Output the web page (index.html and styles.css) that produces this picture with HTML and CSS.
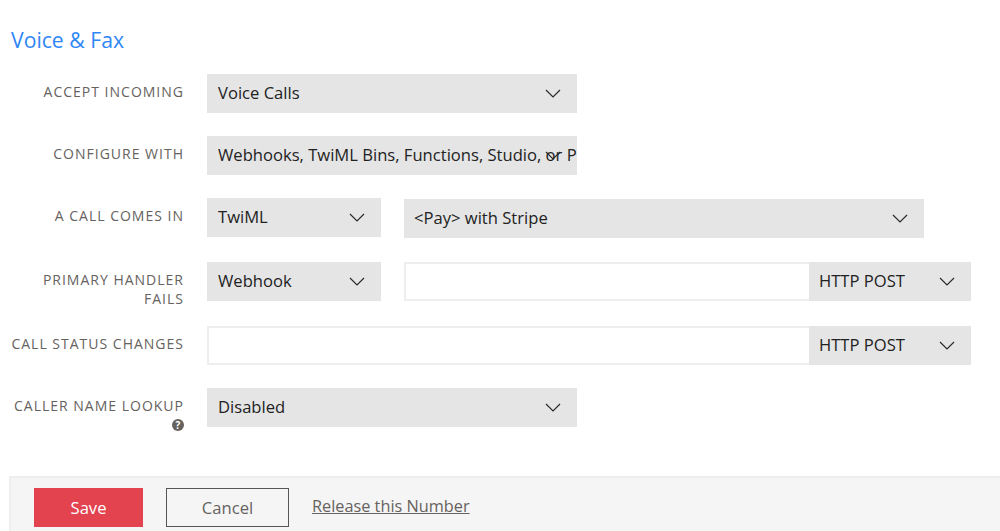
FILE: index.html
```html
<!DOCTYPE html>
<html lang="en">
<head>
<meta charset="utf-8">
<title>Voice &amp; Fax</title>
<link rel="stylesheet" href="styles.css">
</head>
<body>
<main class="content">
  <h2 class="title">Voice &amp; Fax</h2>
  <div class="form">
    <div class="row">
      <div class="label">ACCEPT INCOMING</div>
      <div class="select w-full"><span class="value">Voice Calls</span><svg class="chev" viewBox="0 0 16 9"><polyline points="1,1 8,8 15,1"/></svg></div>
    </div>
    <div class="row">
      <div class="label">CONFIGURE WITH</div>
      <div class="select w-full"><span class="value">Webhooks, TwiML Bins, Functions, Studio, or P</span><svg class="chev" viewBox="0 0 16 9"><polyline points="1,1 8,8 15,1"/></svg></div>
    </div>
    <div class="row row-tall">
      <div class="label">A CALL COMES IN</div>
      <div class="select w-small"><span class="value">TwiML</span><svg class="chev" viewBox="0 0 16 9"><polyline points="1,1 8,8 15,1"/></svg></div>
      <div class="select w-wide shifted"><span class="value">&lt;Pay&gt; with Stripe</span><svg class="chev" viewBox="0 0 16 9"><polyline points="1,1 8,8 15,1"/></svg></div>
    </div>
    <div class="row row-tall">
      <div class="label">PRIMARY HANDLER FAILS</div>
      <div class="select w-small"><span class="value">Webhook</span><svg class="chev" viewBox="0 0 16 9"><polyline points="1,1 8,8 15,1"/></svg></div>
      <div class="url-group w-url">
        <input class="url" type="text" aria-label="Primary handler URL">
        <div class="select w-method"><span class="value">HTTP POST</span><svg class="chev" viewBox="0 0 16 9"><polyline points="1,1 8,8 15,1"/></svg></div>
      </div>
    </div>
    <div class="row">
      <div class="label">CALL STATUS CHANGES</div>
      <div class="url-group w-url-full">
        <input class="url" type="text" aria-label="Status callback URL">
        <div class="select w-method"><span class="value">HTTP POST</span><svg class="chev" viewBox="0 0 16 9"><polyline points="1,1 8,8 15,1"/></svg></div>
      </div>
    </div>
    <div class="row">
      <div class="label">CALLER NAME LOOKUP<span class="help">?</span></div>
      <div class="select w-full"><span class="value">Disabled</span><svg class="chev" viewBox="0 0 16 9"><polyline points="1,1 8,8 15,1"/></svg></div>
    </div>
  </div>
</main>
<footer class="footer">
  <button class="btn btn-save" type="button">Save</button>
  <button class="btn btn-cancel" type="button">Cancel</button>
  <a class="release" href="#">Release this Number</a>
</footer>
</body>
</html>
```

FILE: styles.css
```css
* { box-sizing: border-box; }
html, body { margin: 0; padding: 0; height: 531px; overflow: hidden; background: #fff; }
body { font-family: "Open Sans", "Noto Sans", sans-serif; color: #222; }

.content { padding: 26px 0 0 11px; }
.title { margin: 0; font-size: 21.2px; line-height: 28px; font-weight: 400; color: #2f86f6; }

.form { display: flex; flex-direction: column; gap: 23px; margin-top: 20px; }
.row { display: flex; align-items: flex-start; gap: 23px; height: 39px; }
.row-tall { height: 41px; }

.label { width: 173px; flex: none; padding-top: 8px; text-align: right; font-size: 14px; line-height: 19px; letter-spacing: 1px; color: #66625e; }

.select { position: relative; flex: none; height: 39px; padding-left: 11px; background: #e5e5e5; overflow: hidden; white-space: nowrap; font-size: 16.6px; line-height: 38px; color: #222; }
.value { display: block; }
.chev { position: absolute; right: 16px; top: 15px; width: 16px; height: 9px; fill: none; stroke: #2a2a2a; stroke-width: 1.2; }

.w-full { width: 370px; }
.w-small { width: 174px; }
.w-wide { width: 520px; padding-left: 10px; }
.w-method { width: 162px; padding-left: 10px; }
.shifted { margin-top: 1px; }

.url-group { display: flex; flex: none; }
.w-url { width: 567px; }
.w-url-full { width: 764px; }
.url { flex: 1; min-width: 0; height: 39px; margin: 0; padding: 0 10px; background: #fff; border: 2px solid #eee; border-right: 0; border-radius: 0; outline: 0; }

.help { display: block; width: 12px; height: 12px; margin: 4px 0 0 auto; border-radius: 50%; background: #66625e; color: #fff; font-size: 10px; font-weight: 700; line-height: 12px; letter-spacing: 0; text-align: center; }

.footer { display: flex; align-items: flex-start; margin: 49px 0 0 9px; height: 60px; padding: 10px 0 0 23px; background: #f5f5f5; border-top: 2px solid #eee; border-left: 2px solid #eee; }
.btn { flex: none; height: 39px; margin: 0; padding: 0; font-family: inherit; font-size: 16.6px; border-radius: 0; }
.btn-save { width: 109px; background: #e3434f; border: 0; color: #fff; font-weight: 500; }
.btn-cancel { width: 123px; margin-left: 23px; background: transparent; border: 1px solid #555; color: #66625e; }
.release { margin-left: 23px; font-size: 16.3px; line-height: 36px; color: #66625e; text-decoration: underline; }
```
